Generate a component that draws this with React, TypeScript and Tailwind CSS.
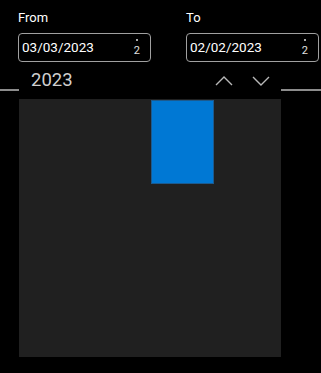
import React from "react";

function DateField({ label, value }: { label: string; value: string }) {
  return (
    <div className="flex w-[133px] shrink-0 flex-col gap-[7px]">
      <span className="text-[13px] leading-4 text-white">{label}</span>
      <div className="flex h-[29px] items-center justify-between rounded-[4px] border border-[#a0a0a0] pl-[3px] pr-[10px]">
        <span className="text-[13.5px] text-white">{value}</span>
        <div className="flex flex-col items-center leading-none text-[#e0e0e0]">
          <span className="block h-[2.5px] w-[2.5px] rounded-full bg-[#e0e0e0]" />
          <span className="mt-[4px] text-[11px]">2</span>
        </div>
      </div>
    </div>
  );
}

function Chevron({ up }: { up?: boolean }) {
  return (
    <svg width="18" height="10" viewBox="0 0 18 10" fill="none">
      <polyline
        points={up ? "1,9 9,1 17,9" : "1,1 9,9 17,1"}
        stroke="#b8b8b8"
        strokeWidth="1.4"
      />
    </svg>
  );
}

export default function App() {
  return (
    <div
      className="relative h-[373px] w-full overflow-hidden bg-black"
      style={{ fontFamily: "Roboto, 'Noto Sans', sans-serif" }}
    >
      <div className="flex gap-[35px] pl-[18px] pt-[10px]">
        <DateField label="From" value="03/03/2023" />
        <DateField label="To" value="02/02/2023" />
      </div>
      <div className="mt-[27px] h-[2px] w-full bg-[#8c8c8c]" />

      <div className="absolute left-[19px] top-[62px] flex h-[295px] w-[262px] flex-col">
        <div className="flex h-[37px] items-center justify-between bg-black pl-[12px] pr-[11px]">
          <span className="text-[18.5px] text-[#cfcfcf]">2023</span>
          <div className="flex items-center gap-[19px]">
            <Chevron up />
            <Chevron />
          </div>
        </div>
        <div className="flex-1 bg-[#202020]">
          <div className="ml-[132px] mt-px h-[84px] w-[63px] border border-[#1c5a8e] bg-[#0078d4]" />
        </div>
      </div>
    </div>
  );
}
